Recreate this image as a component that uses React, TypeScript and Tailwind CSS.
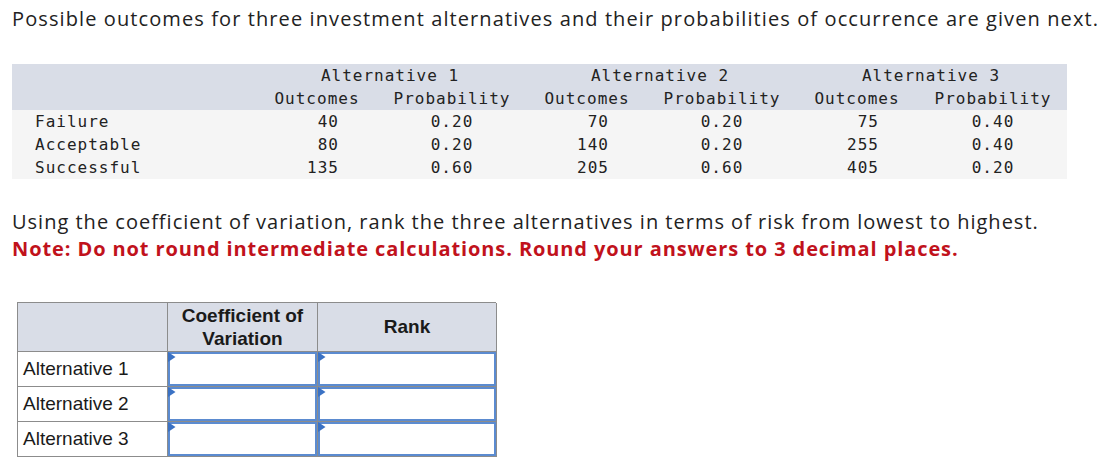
const groups = [
  { name: "Alternative 1", outcomes: ["40", "80", "135"], probs: ["0.20", "0.20", "0.60"] },
  { name: "Alternative 2", outcomes: ["70", "140", "205"], probs: ["0.20", "0.20", "0.60"] },
  { name: "Alternative 3", outcomes: ["75", "255", "405"], probs: ["0.40", "0.40", "0.20"] },
];

const labels = ["Failure", "Acceptable", "Successful"];

function InputCell() {
  return (
    <div className="relative h-full border-2 border-[#5b8bd0] bg-white">
      <svg className="absolute -left-[2px] -top-[2px]" width="8" height="11" viewBox="0 0 8 11">
        <polygon points="0,0 7.5,5 0,10" fill="#3b72c4" />
      </svg>
    </div>
  );
}

export default function App() {
  return (
    <div className="w-[1117px] h-[469px] bg-white text-[#222] font-['Open_Sans',sans-serif]">
      <p className="pl-[12px] pt-[7px] text-[20px] leading-[24px] tracking-[1.1px]">
        Possible outcomes for three investment alternatives and their probabilities of occurrence are given next.
      </p>

      <div className="ml-[12px] mt-[33px] w-[1055px] font-['DejaVu_Sans_Mono',monospace] text-[16px] tracking-[1px] leading-[23px] text-[#222]">
        <div className="grid grid-cols-[243px_124px_146px_124px_146px_124px_148px] bg-[#d9dde7]">
          <div />
          {groups.map((g) => (
            <div key={g.name} className="col-span-2 text-center">
              {g.name}
            </div>
          ))}
          <div />
          {groups.map((g) => (
            <>
              <div key={g.name + "o"} className="text-center">Outcomes</div>
              <div key={g.name + "p"} className="text-center">Probability</div>
            </>
          ))}
        </div>
        <div className="grid grid-cols-[243px_124px_146px_124px_146px_124px_148px] bg-[#f5f5f5]">
          {labels.map((label, i) => (
            <>
              <div key={label} className="pl-[23px]">{label}</div>
              {groups.map((g) => (
                <>
                  <div key={g.name + i + "o"} className="text-right pr-[40px]">{g.outcomes[i]}</div>
                  <div key={g.name + i + "p"} className="text-center">{g.probs[i]}</div>
                </>
              ))}
            </>
          ))}
        </div>
      </div>

      <p className="pl-[12px] mt-[29px] text-[20px] leading-[27px] tracking-[1px]">
        Using the coefficient of variation, rank the three alternatives in terms of risk from lowest to highest.
      </p>
      <p className="pl-[12px] text-[20px] leading-[27px] font-bold tracking-[0.9px] text-[#c1121c]">
        Note: Do not round intermediate calculations. Round your answers to 3 decimal places.
      </p>

      <div className="ml-[17px] mt-[40px] w-[479px] grid grid-cols-[150px_150px_179px] border-l border-t border-[#8c8c8c] font-['Liberation_Sans',Arial,sans-serif] text-[#1a1a1a]">
        <div className="h-[49px] bg-[#d9dde7] border-r border-b border-[#8c8c8c]" />
        <div className="h-[49px] bg-[#d9dde7] border-r border-b border-[#8c8c8c] flex items-center justify-center text-center font-bold text-[19px] leading-[23px]">
          Coefficient of
          <br />
          Variation
        </div>
        <div className="h-[49px] bg-[#d9dde7] border-r border-b border-[#8c8c8c] flex items-center justify-center font-bold text-[19px]">
          Rank
        </div>
        {["Alternative 1", "Alternative 2", "Alternative 3"].map((a) => (
          <>
            <div key={a} className="h-[35px] border-r border-b border-[#8c8c8c] flex items-center pl-[5px] text-[19px]">
              {a}
            </div>
            <div key={a + "c"} className="h-[35px] border-r border-b border-[#8c8c8c]">
              <InputCell />
            </div>
            <div key={a + "r"} className="h-[35px] border-r border-b border-[#8c8c8c]">
              <InputCell />
            </div>
          </>
        ))}
      </div>
    </div>
  );
}
